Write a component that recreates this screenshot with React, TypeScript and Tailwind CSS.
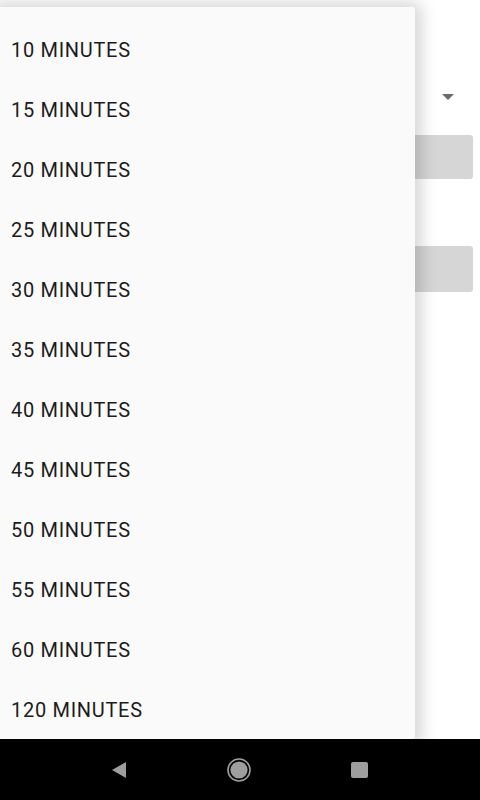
const minutes = [10, 15, 20, 25, 30, 35, 40, 45, 50, 55, 60, 120];

export default function App() {
  return (
    <div className="relative flex h-[800px] w-[480px] flex-col overflow-hidden bg-white font-['Roboto',sans-serif]">
      {/* page behind the menu */}
      <div className="relative flex-1 bg-white">
        <div className="flex flex-col items-end pr-[7px]">
          <svg className="mr-[19px] mt-[93px] h-[8px] w-[12px]" viewBox="0 0 12 8">
            <path d="M0 1h12L6 7z" fill="#6b6b6b" />
          </svg>
          <div className="mt-[34px] h-[44px] w-[120px] rounded-[3px] bg-[#d6d6d6]" />
          <div className="mt-[67px] h-[46px] w-[120px] rounded-[3px] bg-[#d6d6d6]" />
        </div>

        {/* dropdown menu */}
        <div className="absolute left-0 top-[7px] h-[732px] w-[415px] overflow-hidden rounded-r-[3px] bg-[#fafafa] pt-[13px] shadow-[0_2px_16px_7px_rgba(0,0,0,0.16)]">
          {minutes.map((m) => (
            <div key={m} className="flex h-[60px] items-center pl-[11px] text-[20px] tracking-[0.7px] text-[#1c1c1c]">
              {m} MINUTES
            </div>
          ))}
        </div>
      </div>

      {/* navigation bar */}
      <div className="relative z-10 flex h-[61px] items-center bg-black">
        <svg className="absolute left-[111px] top-[23px] h-[16px] w-[16px]" viewBox="0 0 16 16">
          <path d="M15 0v16L1 8z" fill="#9e9e9e" />
        </svg>
        <svg className="absolute left-[227px] top-[19px] h-[24px] w-[24px]" viewBox="0 0 24 24">
          <circle cx="12" cy="12" r="11" fill="none" stroke="#9e9e9e" strokeWidth="1.6" />
          <circle cx="12" cy="12" r="8.6" fill="#9e9e9e" />
        </svg>
        <div className="absolute left-[351px] top-[23px] h-[16px] w-[17px] rounded-[2px] bg-[#9e9e9e]" />
      </div>
    </div>
  );
}
